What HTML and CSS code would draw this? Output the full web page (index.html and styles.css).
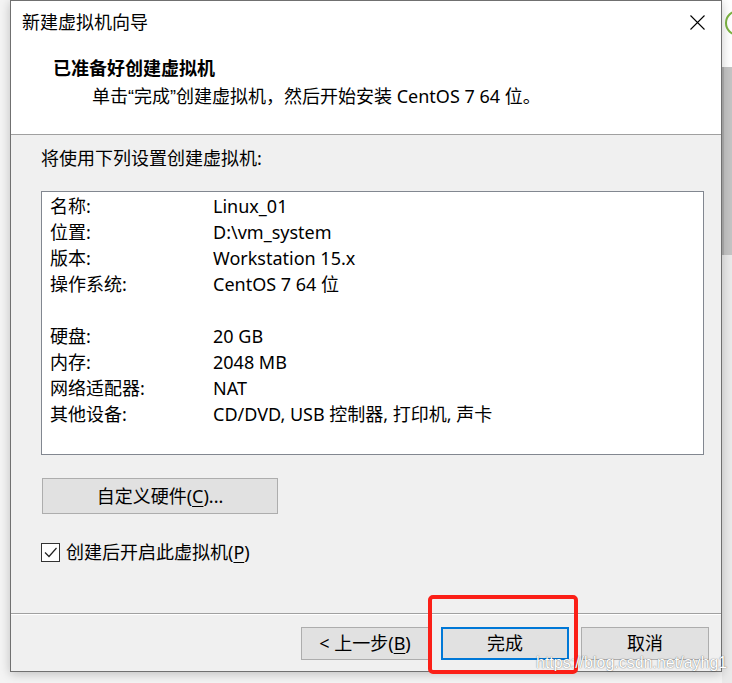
FILE: index.html
```html
<!DOCTYPE html>
<html lang="zh-CN">
<head>
<meta charset="utf-8">
<title>新建虚拟机向导</title>
<link rel="stylesheet" href="styles.css">
</head>
<body>
<div class="desk">
  <div class="backwin">
    <div class="bw-top"><svg class="bw-ring" width="10" height="40" viewBox="0 0 10 40"><circle cx="16" cy="23" r="12" fill="none" stroke="#7cb342" stroke-width="2"/></svg></div>
    <div class="bw-thumb"></div>
    <div class="bw-rest"></div>
  </div>

  <div class="dialog">
    <div class="header">
      <div class="titlebar">
        <span class="title">新建虚拟机向导</span>
        <svg class="close" width="15" height="15" viewBox="0 0 15 15"><path d="M0.5 0.5 L14.5 14.5 M14.5 0.5 L0.5 14.5" stroke="#000" stroke-width="1.1" fill="none"/></svg>
      </div>
      <div class="heading">已准备好创建虚拟机</div>
      <div class="sub">单击<span class="q">“</span>完成<span class="q">”</span>创建虚拟机，然后开始安装 CentOS 7 64 位。</div>
    </div>

    <div class="body">
      <div class="intro">将使用下列设置创建虚拟机:</div>
      <div class="list">
        <div class="row"><span class="k">名称:</span><span class="v">Linux_01</span></div>
        <div class="row"><span class="k">位置:</span><span class="v">D:\vm_system</span></div>
        <div class="row"><span class="k">版本:</span><span class="v">Workstation 15.x</span></div>
        <div class="row"><span class="k">操作系统:</span><span class="v">CentOS 7 64 位</span></div>
        <div class="row"><span class="k"></span><span class="v"></span></div>
        <div class="row"><span class="k">硬盘:</span><span class="v">20 GB</span></div>
        <div class="row"><span class="k">内存:</span><span class="v">2048 MB</span></div>
        <div class="row"><span class="k">网络适配器:</span><span class="v">NAT</span></div>
        <div class="row"><span class="k">其他设备:</span><span class="v">CD/DVD, USB 控制器, 打印机, 声卡</span></div>
      </div>
      <div class="btn custom">自定义硬件(<u>C</u>)...</div>
      <div class="check">
        <span class="box"><svg width="17" height="17" viewBox="0 0 17 17"><path d="M3 8.5 L7 12.5 L14.5 4" stroke="#222" stroke-width="1.2" fill="none"/></svg></span>
        <span class="check-label">创建后开启此虚拟机(<u>P</u>)</span>
      </div>
    </div>

    <div class="footer">
      <div class="btn nav">&lt; 上一步(<u>B</u>)</div>
      <div class="btn nav primary">完成</div>
      <div class="btn nav">取消</div>
    </div>
  </div>

  <div class="annot"></div>
  <div class="watermark">https://blog.csdn.net/ayhg1</div>
</div>
</body>
</html>
```

FILE: styles.css
```css
html, body {
  margin: 0;
  padding: 0;
}

body {
  width: 732px;
  height: 683px;
  overflow: hidden;
  background: #f4f4f4;
  font-family: "Noto Sans", "Noto Sans CJK SC", sans-serif;
  font-size: 18px;
  color: #000;
}

.desk {
  position: relative;
  width: 732px;
  height: 683px;
}

/* window behind, visible at the right edge */
.backwin {
  position: absolute;
  left: 722px;
  top: 0;
  width: 10px;
  height: 683px;
  display: flex;
  flex-direction: column;
}
.bw-top {
  height: 67px;
  background: #fff;
}
.bw-ring {
  display: block;
}
.bw-thumb {
  height: 188px;
  background: #c4c4c4;
  border-left: 2px solid #b0b0b0;
}
.bw-rest {
  flex: 1;
  background: #eaeaea;
}

/* dialog */
.dialog {
  position: relative;
  margin-left: 10px;
  width: 710px;
  border: 1px solid #707070;
  background: #f0f0f0;
  box-shadow: 0 2px 10px rgba(0, 0, 0, 0.22);
  display: flex;
  flex-direction: column;
}

.header {
  height: 133px;
  background: #fff;
  border-bottom: 1px solid #a0a0a0;
}

.titlebar {
  height: 43px;
  display: flex;
  align-items: center;
  justify-content: space-between;
  padding: 0 16px 0 11px;
}
.title {
  line-height: 43px;
}
.close {
  display: block;
}

.heading {
  margin-top: 11px;
  padding-left: 42px;
  line-height: 26px;
  font-weight: bold;
}

.sub {
  margin-top: 2px;
  padding-left: 81px;
  line-height: 26px;
}
.q {
  font-family: "Liberation Sans", sans-serif;
}

.body {
  height: 468px;
  padding: 10px 0 0 30px;
  border-bottom: 1px solid #a0a0a0;
}

.intro {
  line-height: 26px;
}

.list {
  margin-top: 20px;
  width: 663px;
  height: 264px;
  box-sizing: border-box;
  border: 1px solid #828790;
  background: #fff;
  padding-top: 1px;
}

.row {
  display: flex;
  height: 26px;
  line-height: 26px;
}
.k {
  width: 163px;
  padding-left: 8px;
  flex: none;
}
.v {
  flex: 1;
}

.btn {
  box-sizing: border-box;
  background: #e1e1e1;
  border: 1px solid #adadad;
  text-align: center;
}
u {
  text-underline-offset: 3px;
}

.custom {
  margin: 23px 0 0 1px;
  width: 236px;
  height: 36px;
  line-height: 34px;
}

.check {
  margin-top: 25px;
  display: flex;
  align-items: center;
  height: 26px;
}
.box {
  box-sizing: border-box;
  width: 19px;
  height: 19px;
  border: 1px solid #333;
  background: #fff;
  display: flex;
  align-items: center;
  justify-content: center;
}
.box svg {
  display: block;
}
.check-label {
  margin-left: 6px;
  line-height: 26px;
}

.footer {
  height: 57px;
  border-top: 1px solid #fff;
  display: flex;
  justify-content: flex-end;
  align-items: flex-start;
  gap: 12px;
  padding: 12px 12px 0 0;
  box-sizing: border-box;
}

.nav {
  width: 128px;
  height: 33px;
  line-height: 31px;
}
.primary {
  border: 2px solid #0078d7;
  line-height: 29px;
}

/* screenshot annotation */
.annot {
  position: absolute;
  left: 428px;
  top: 595px;
  width: 150px;
  height: 79px;
  box-sizing: border-box;
  border: 4px solid #fb1f17;
  border-radius: 5px;
}

.watermark {
  position: absolute;
  left: 536px;
  top: 653px;
  font-family: "Liberation Sans", sans-serif;
  font-size: 16px;
  line-height: 20px;
  color: #fff;
  text-shadow: 0 0 1px rgba(0, 0, 0, 0.55), 0 0 2px rgba(0, 0, 0, 0.2);
  white-space: nowrap;
}
```
